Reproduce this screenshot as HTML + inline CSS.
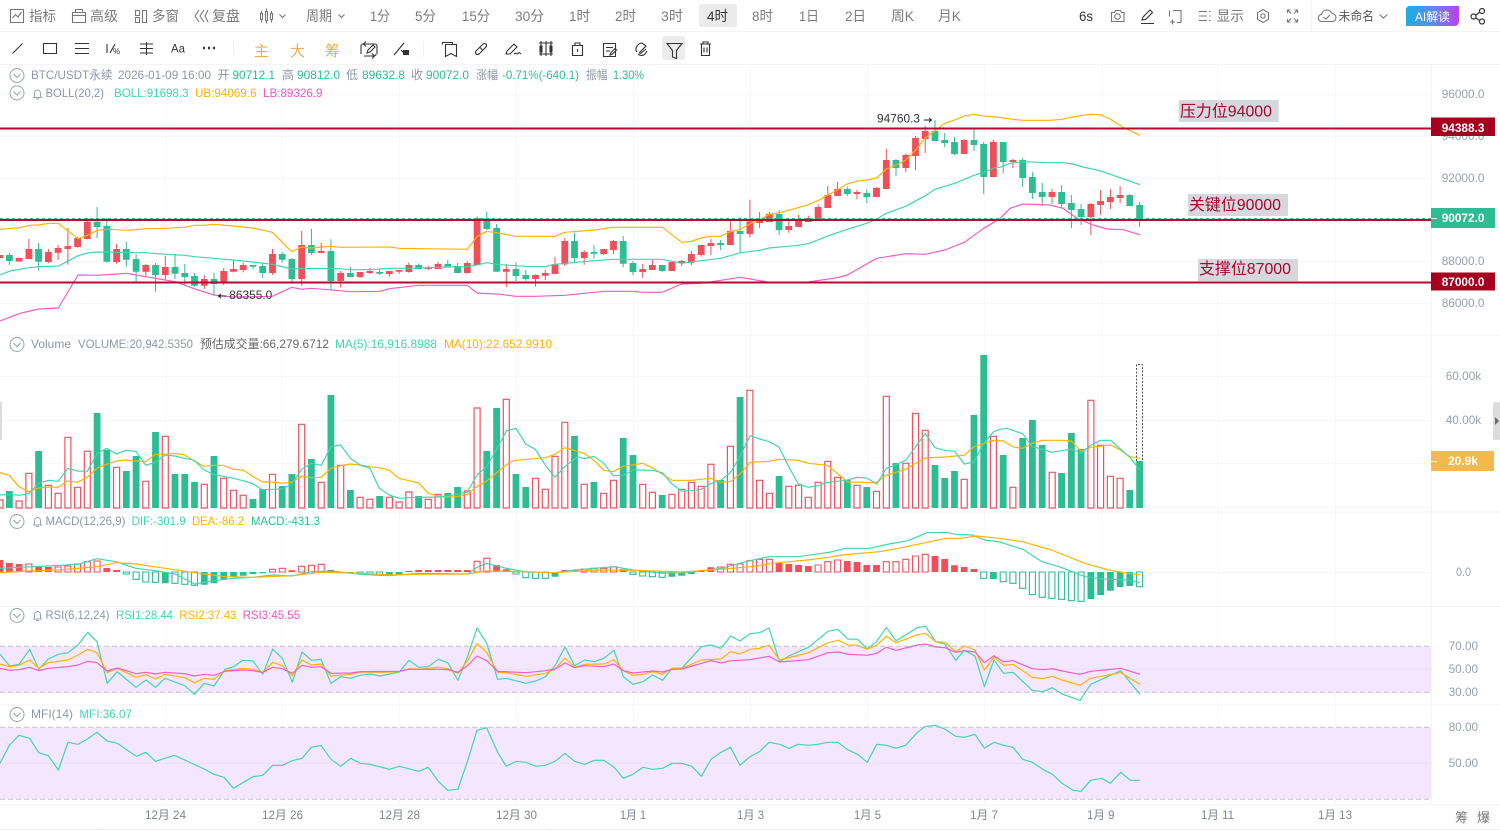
<!DOCTYPE html>
<html lang="zh">
<head>
<meta charset="utf-8">
<title>BTC/USDT K线</title>
<style>
html,body{margin:0;padding:0;background:#fff;width:1500px;height:831px;overflow:hidden}
svg{display:block}
text{font-family:"Liberation Sans","Noto Sans CJK SC",sans-serif;font-size:12px}
.tb{font-size:14px;fill:#7b7b7b}
.g{fill:#8f96a6}
.ax{fill:#98a0ae}
.tl{fill:#3ed6b0}
.gr{fill:#2ebd93}
.or{fill:#ffb300}
.pk{fill:#f552c5}
.dt{fill:#7f858f}
.lb{fill:#fff;font-weight:bold}
.an{font-size:16px;fill:#a8052c}
.line{fill:none;stroke-width:1.2;stroke-linejoin:round}
.ic{fill:none;stroke:#777;stroke-width:1.1}
.id{fill:none;stroke:#333;stroke-width:1.1}
.cc{fill:none;stroke:#9aa2b1;stroke-width:1}
</style>
</head>
<body>
<svg width="1500" height="831" viewBox="0 0 1500 831" xmlns="http://www.w3.org/2000/svg">
<rect width="1500" height="831" fill="#fff"/>

<!-- frame / grid -->
<path stroke="#f4f4f5" fill="none" d="M0 31.5H1500M0 64.5H1500M0 335H1500M0 512H1500M0 606.5H1500M0 705H1500M0 804.5H1500M1431.5 65V805M1311.5 0V31"/>
<path stroke="#f7f7f8" fill="none" d="M165.5 65V805M282.5 65V805M399.5 65V805M516.5 65V805M633.5 65V805M750.5 65V805M867.5 65V805M984.5 65V805M1101.5 65V805M1218.5 65V805M1335.5 65V805M0 94.5H1431M0 136.5H1431M0 178.5H1431M0 261.5H1431M0 303.5H1431M0 376.5H1431M0 420.5H1431M0 463.5H1431M0 507.8H1431M0 572.5H1431"/>
<path stroke="#efeff1" d="M0 829.5H1500M100.5 830V831M201.5 830V831M551.5 830V831" fill="none"/>

<!-- top toolbar -->
<rect x="699" y="4" width="38" height="23" rx="3" fill="#ebebeb"/>
<path class="ic" d="M10.5 9.5h13v13h-13zM12.5 18l3-3.5 2.5 2.5 3.5-5"/>
<text class="tb" x="29" y="21" textLength="27" lengthAdjust="spacingAndGlyphs">指标</text>
<path class="ic" d="M72.5 12.5h13v10h-13zM75.5 12.5v-3h7v3M72.5 15.5h13"/>
<text class="tb" x="90" y="21" textLength="28" lengthAdjust="spacingAndGlyphs">高级</text>
<path class="ic" d="M135.5 10.5h4v5h-4zM135.5 17.5h4v5h-4zM142.5 10.5h4v12h-4z"/>
<text class="tb" x="152" y="21" textLength="27" lengthAdjust="spacingAndGlyphs">多窗</text>
<path class="ic" d="M199 10l-4 6 4 6M204 10l-4 6 4 6M208 10l-3 6 3 6"/>
<text class="tb" x="212" y="21" textLength="28" lengthAdjust="spacingAndGlyphs">复盘</text>
<path class="ic" d="M260.5 13.5h2v6h-2zM261.5 11v2.5M261.5 19.5v3M265.5 11.5h2v9h-2zM266.5 8.5v3M266.5 20.5v3M270.5 13.5h2v6h-2zM271.5 11v2.5M271.5 19.5v3"/>
<path class="ic" d="M279.5 14.5l3 3 3-3"/>
<text class="tb" x="306" y="21" textLength="26" lengthAdjust="spacingAndGlyphs">周期</text>
<path class="ic" d="M338.5 14.5l3 3 3-3"/>
<text class="tb" x="370" y="21" textLength="20" lengthAdjust="spacingAndGlyphs">1分</text>
<text class="tb" x="415" y="21" textLength="21" lengthAdjust="spacingAndGlyphs">5分</text>
<text class="tb" x="462" y="21" textLength="28" lengthAdjust="spacingAndGlyphs">15分</text>
<text class="tb" x="515" y="21" textLength="29" lengthAdjust="spacingAndGlyphs">30分</text>
<text class="tb" x="569" y="21" textLength="21" lengthAdjust="spacingAndGlyphs">1时</text>
<text class="tb" x="615" y="21" textLength="21" lengthAdjust="spacingAndGlyphs">2时</text>
<text class="tb" x="661" y="21" textLength="22" lengthAdjust="spacingAndGlyphs">3时</text>
<text class="tb" x="707" y="21" textLength="21" lengthAdjust="spacingAndGlyphs" style="fill:#333">4时</text>
<text class="tb" x="752" y="21" textLength="21" lengthAdjust="spacingAndGlyphs">8时</text>
<text class="tb" x="799" y="21" textLength="20" lengthAdjust="spacingAndGlyphs">1日</text>
<text class="tb" x="845" y="21" textLength="21" lengthAdjust="spacingAndGlyphs">2日</text>
<text class="tb" x="891" y="21" textLength="23" lengthAdjust="spacingAndGlyphs">周K</text>
<text class="tb" x="938" y="21" textLength="23" lengthAdjust="spacingAndGlyphs">月K</text>
<text x="1079" y="21" textLength="14" lengthAdjust="spacingAndGlyphs" style="font-size:14px;fill:#333">6s</text>
<path class="ic" d="M1111.5 12.5h3l1-2h5l1 2h2.5v9h-12.5z"/><circle class="ic" cx="1117.5" cy="16.5" r="2.8"/>
<path class="id" d="M1142 20l1-3 7-7 2.5 2.5-7 7zM1141 23.5h13"/>
<path class="ic" d="M1173 10.5h8v12h-4M1169.5 10.5v6M1170 22h5M1172.5 19.5v5"/>
<path class="ic" d="M1199 11.5h8M1199 16h8M1199 20.5h8M1209 11.5h1.5M1209 16h1.5M1209 20.5h1.5"/>
<text class="tb" x="1216.5" y="21" textLength="27.5" lengthAdjust="spacingAndGlyphs">显示</text>
<path class="ic" d="M1263 9.5l5.5 3.2v6.6l-5.5 3.2-5.5-3.2v-6.6z"/><circle class="ic" cx="1263" cy="16" r="2.2"/>
<path class="ic" d="M1287.5 13v-3h3M1294.5 10h3v3M1287.5 19v3h3M1294.5 22h3v-3M1288 10.5l3 3M1297 10.5l-3 3M1288 21.5l3-3M1297 21.5l-3-3"/>
<path class="ic" d="M1322 21.5a3.5 3.5 0 0 1-.5-7 5.5 5.5 0 0 1 10.5-1 4 4 0 0 1 0 8zM1323.500 17l2.500 2 4-4"/>
<text x="1338.500" y="20.500" textLength="35.500" lengthAdjust="spacingAndGlyphs" style="font-size:12.500px;fill:#555">未命名</text>
<path class="ic" d="M1379.500 14.500l4 3.500 4-3.500"/>
<defs><linearGradient id="ai" x1="0" x2="1" y1="0" y2="0"><stop offset="0" stop-color="#1dade0"/><stop offset=".5" stop-color="#5d8cec"/><stop offset="1" stop-color="#c03df2"/></linearGradient></defs>
<path d="M1410 6H1459V21Q1459 26 1454 26H1406V10Q1406 6 1410 6Z" fill="url(#ai)"/>
<text x="1415" y="21" textLength="35" lengthAdjust="spacingAndGlyphs" fill="#fff">AI解读</text>
<g fill="none" stroke="#333" stroke-width="1.2"><circle cx="1473.500" cy="16.500" r="2.500"/><circle cx="1482" cy="11" r="2.500"/><circle cx="1482" cy="21.500" r="2.500"/><path d="M1475.700 15l4-2.700M1475.700 18l4 2.500"/></g>

<!-- second toolbar -->
<rect x="662" y="36" width="23" height="24" rx="3" fill="#ebebeb"/>
<path class="id" d="M12.500 53.500l10-10"/>
<path class="id" d="M43.500 43.500h13v10h-13z"/>
<path class="id" d="M75 43.500h14M75 48.500h14M75 53.500h14"/>
<path class="id" d="M107 44v9M110 53l5-9"/><text x="113" y="54" style="font-size:8px;fill:#333">%</text>
<path class="id" d="M140 44h13M140 48.500h13M140 53h13M146.500 42v13"/>
<text x="171" y="52.500" textLength="14" lengthAdjust="spacingAndGlyphs" fill="#333">Aa</text>
<path d="M203 48h2M208 48h2M213 48h2" stroke="#333" stroke-width="2.500" fill="none"/>
<path stroke="#f0f0f0" d="M233.500 41V57M423.500 41V57" fill="none"/>
<text x="254" y="56" style="font-size:15px;fill:#eab04e">主</text>
<text x="290" y="56" style="font-size:15px;fill:#eab04e">大</text>
<text x="325" y="56" style="font-size:15px;fill:#eab04e">筹</text>
<path class="id" d="M363 44h12a2 2 0 0 1 2 2v8M376 54a2 2 0 0 1-2 2H364M363 44a2 2 0 0 0-2 2v8M367 53l1-3 5-5 2 2-5 5zM366 41.500l-2.500 2.500 2.500 2.500M372 58.500l2.500-2.500-2.500-2.500"/>
<path class="id" d="M394 55l10-12M401 50l3 3"/><rect x="403" y="50" width="6" height="5" fill="#333"/>
<path class="id" d="M442.500 44.500v-2h10v2M445.500 44.500h11v12l-5.500-3-5.500 3z"/>
<path class="id" d="M476 51l7-7q1.500-1 3 0q1 1.500 0 3l-7 7q-1.500 1-3 0q-1-1.500 0-3zM480 47.500l3 3"/>
<path class="id" d="M506 54l1-3 7-7 3 3-7 7zM514 54c2-2 3 1 4-.5s2-.5 3 .5"/>
<path class="id" d="M539 43h14M539 54h14M541 41v15M546 41v15M551 41v15"/>
<path d="M539.500 45.500h3v7h-3zM549.500 45.500h3v7h-3z" fill="#333"/>
<path class="id" d="M572.500 45.500h10v10h-10zM575 45.500v-2.500h5v2.500M577.500 49v3"/>
<path class="id" d="M603.500 43.500h12v13h-12zM606 47.500h7M606 51h4M610 55l1-2.500 4-4 1.500 1.500-4 4z"/>
<path class="id" d="M637 52c-3-3 1-9 5-9l4 3-6 6c-1 1 0 2 1 1l5-4M638 54c2 2 5 2 7 0l2-3"/>
<path class="id" d="M667 43.500h15l-5.500 7v8l-4-1.500v-6.500z"/>
<path class="id" d="M700 44h11M703 44v-2h5v2M701.500 44v11.500h8V44M704 47.500v5M707 47.500v5"/>

<!-- chevrons / bells -->
<g class="cc">
<circle cx="17" cy="75.500" r="7"/><path d="M13.500 74l3.500 3.500 3.500-3.500"/>
<circle cx="17" cy="93" r="7"/><path d="M13.500 91.500l3.500 3.500 3.500-3.500"/>
<circle cx="17" cy="344.500" r="7"/><path d="M13.500 343l3.500 3.500 3.500-3.500"/>
<circle cx="17" cy="521.500" r="7"/><path d="M13.500 520l3.500 3.500 3.500-3.500"/>
<circle cx="17" cy="615.500" r="7"/><path d="M13.500 614l3.500 3.500 3.500-3.500"/>
<circle cx="17" cy="714.500" r="7"/><path d="M13.500 713l3.500 3.500 3.500-3.500"/>
<path d="M33 97.500h9M34.500 97.500v-4.500a3 3 0 0 1 6 0v4.500M36 99h3"/>
<path d="M33 525h9M34.500 525v-4.500a3 3 0 0 1 6 0v4.500M36 526.500h3"/>
<path d="M33 619h9M34.500 619v-4.500a3 3 0 0 1 6 0v4.500M36 620.500h3"/>
</g>

<!-- legends -->
<text class="g" x="31" y="79" textLength="81.500" lengthAdjust="spacingAndGlyphs">BTC/USDT永续</text>
<text class="g" x="118" y="79" textLength="93" lengthAdjust="spacingAndGlyphs">2026-01-09 16:00</text>
<text class="g" x="217.500" y="79">开</text><text class="gr" x="232.500" y="79" textLength="42.500" lengthAdjust="spacingAndGlyphs">90712.1</text>
<text class="g" x="282" y="79">高</text><text class="gr" x="297" y="79" textLength="43" lengthAdjust="spacingAndGlyphs">90812.0</text>
<text class="g" x="346" y="79">低</text><text class="gr" x="362" y="79" textLength="43" lengthAdjust="spacingAndGlyphs">89632.8</text>
<text class="g" x="411" y="79">收</text><text class="gr" x="426" y="79" textLength="43" lengthAdjust="spacingAndGlyphs">90072.0</text>
<text class="g" x="476" y="79" textLength="22" lengthAdjust="spacingAndGlyphs">涨幅</text><text class="gr" x="502" y="79" textLength="77" lengthAdjust="spacingAndGlyphs">-0.71%(-640.1)</text>
<text class="g" x="586" y="79" textLength="21.500" lengthAdjust="spacingAndGlyphs">振幅</text><text class="gr" x="613" y="79" textLength="31" lengthAdjust="spacingAndGlyphs">1.30%</text>

<text class="g" x="45.500" y="97" textLength="58.500" lengthAdjust="spacingAndGlyphs">BOLL(20,2)</text>
<text class="tl" x="114" y="97" textLength="74.500" lengthAdjust="spacingAndGlyphs">BOLL:91698.3</text>
<text class="or" x="195" y="97" textLength="61.500" lengthAdjust="spacingAndGlyphs">UB:94069.6</text>
<text class="pk" x="263" y="97" textLength="59.500" lengthAdjust="spacingAndGlyphs">LB:89326.9</text>

<text class="g" x="31" y="348" textLength="40" lengthAdjust="spacingAndGlyphs">Volume</text>
<text class="g" x="78" y="348" textLength="115" lengthAdjust="spacingAndGlyphs">VOLUME:20,942.5350</text>
<text x="200" y="348" textLength="129" lengthAdjust="spacingAndGlyphs" fill="#666">预估成交量:66,279.6712</text>
<text class="tl" x="335" y="348" textLength="102" lengthAdjust="spacingAndGlyphs">MA(5):16,916.8988</text>
<text class="or" x="444" y="348" textLength="108" lengthAdjust="spacingAndGlyphs">MA(10):22,652.9910</text>

<text class="g" x="45.500" y="525" textLength="80" lengthAdjust="spacingAndGlyphs">MACD(12,26,9)</text>
<text class="tl" x="131.600" y="525" textLength="54" lengthAdjust="spacingAndGlyphs">DIF:-301.9</text>
<text class="or" x="192" y="525" textLength="52" lengthAdjust="spacingAndGlyphs">DEA:-86.2</text>
<text class="gr" x="251" y="525" textLength="69" lengthAdjust="spacingAndGlyphs">MACD:-431.3</text>

<text class="g" x="45.500" y="619" textLength="64" lengthAdjust="spacingAndGlyphs">RSI(6,12,24)</text>
<text class="tl" x="116" y="619" textLength="57" lengthAdjust="spacingAndGlyphs">RSI1:28.44</text>
<text class="or" x="179.400" y="619" textLength="57" lengthAdjust="spacingAndGlyphs">RSI2:37.43</text>
<text class="pk" x="242.600" y="619" textLength="57.500" lengthAdjust="spacingAndGlyphs">RSI3:45.55</text>

<text class="g" x="31" y="718" textLength="42" lengthAdjust="spacingAndGlyphs">MFI(14)</text>
<text class="tl" x="79.400" y="718" textLength="52.600" lengthAdjust="spacingAndGlyphs">MFI:36.07</text>

<!-- candles: wicks -->
<path fill="none" stroke="#2ebd93" stroke-width="1" d="M9.400 253V265M38.600 243V270.700M97.100 207V238M106.800 217.700V262.700M126.300 242V266.700M136.100 254V281.700M155.500 263V291.700M175 254V279M184.800 264V285M194.500 273V286.700M214 272.700V295M253 265V269M262.700 263V277.700M282.200 252V262.400M291.900 258V283.700M311.400 228.700V255M330.900 239.400V290M350.400 266.700V277M379.600 269V275M418.600 263.400V269M447.800 259.700V266.400M457.600 263V273M486.800 211.400V230M496.600 224V271.700M516 262.400V281M525.800 270V280.700M574.500 232.700V263.400M594 245V258.700M623.200 236V267M633 261V275M662.200 265V272M720.600 240V250M740.100 217V253.400M779.100 210V235M847.300 186.700V196M866.800 189.400V203M896 159V175.700M935 120V141M944.700 133V147M954.500 137V155M974 128V151M983.700 142V194M1003.200 142V173.400M1022.700 158V187M1032.400 172V199M1042.200 183V206M1061.600 185V208M1071.400 195V228M1081.100 204V225M1129.800 194V206M1139.600 202V227"/>
<path fill="none" stroke="#ef4f59" stroke-width="1" d="M19.100 257.300V261.700M28.900 239V259M48.400 249V263M58.100 245V260M67.900 228V264.700M77.600 236.700V247.700M87.300 217.700V239.300M116.600 244V263.700M145.800 264V276.700M165.300 256V280M204.300 275V289M223.700 268V285M233.500 260V272.400M243.200 262.700V272.400M272.500 249V274.700M301.700 231V285.700M321.200 243V253M340.700 271V287.400M360.100 272V278M369.900 268V274M389.400 271V276.700M399.100 270V273.700M408.900 262.400V272.700M428.300 265.700V270M438.100 262V269M467.300 261.400V273.700M477.100 216.400V265M506.300 263.700V287M535.500 274.400V286.400M545.300 270V280M555 257V274M564.800 238V266M584.200 250V264.700M603.700 249V255M613.500 240V254M642.700 264V278M652.400 260V270M681.700 259.700V266M691.400 251V265M701.200 245V256.700M710.900 239V255M730.400 221.400V245M749.900 199.700V237.400M759.600 212V228M769.400 212V222M788.800 220V232.700M798.600 215V227M808.300 215.700V222M818.100 204.400V219M827.800 186V208M837.600 182V196M857 190V199.400M876.500 187V197M886.300 149V189M905.800 154V172M915.500 136V170M925.200 126V153M964.200 139V154M993.400 140V177M1012.900 159V168M1052 189V204M1090.900 203V235M1100.600 190V215M1110.400 189V209M1120.100 186V203"/>
<!-- candles: bodies -->
<path fill="none" stroke="#2ebd93" stroke-width="6.800" d="M9.400 255V261M38.600 249V261.700M97.100 221.700V227M106.800 226V261.700M126.300 249V259.700M136.100 259V271.700M155.500 265V275M175 267V273.700M184.800 273V277M194.500 276V285.700M214 279V284M253 265V266.700M262.700 266V273M282.200 254V259.700M291.900 259V279M311.400 245V253M330.900 251V281M350.400 273V277M379.600 272V273.700M418.600 265V269M447.800 264V266.400M457.600 266V273M486.800 218.300V229M496.600 228V271.700M516 269V276M525.800 275V279M574.500 241V258M594 252V253.700M623.200 241V263.700M633 263V272M662.200 265V271M720.600 243V245M740.100 231V234M779.100 214V230M847.300 189V194M866.800 193V197M896 160V168M935 131V141M944.700 140V143M954.500 142V154M974 140V145M983.700 144V177M1003.200 142V162M1022.700 160V178M1032.400 177V193M1042.200 192V197M1061.600 192V204M1071.400 203V210M1081.100 209V217M1129.800 195V206M1139.600 205V219"/>
<path fill="none" stroke="#ef4f59" stroke-width="6.800" d="M0 255V258M19.100 258V261.500M28.900 249V259M48.400 252V262M58.100 248V252.700M67.900 246V249M77.600 238V247M87.300 221.700V239M116.600 249V262M145.800 265V271.700M165.300 267V275M204.300 279V285.700M223.700 271V282.700M233.500 269V271.700M243.200 265V270M272.500 254V273M301.700 245V279M321.200 251V253M340.700 273V281M360.100 272V277M369.900 271V273M389.400 271V274M399.100 270V271.700M408.900 265V272M428.300 267.700V269M438.100 264V269M467.300 263V273M477.100 218.300V265M506.300 269V271.700M535.500 275V279M545.300 273V275.700M555 264V274M564.800 241V264.400M584.200 252V258M603.700 249V254M613.500 241V250M642.700 269V272M652.400 265V270M671.900 262V271M681.700 261V262.700M691.400 254V262.700M701.200 245V255M710.900 243V246M730.400 231V245M749.900 221.400V234M759.600 220V223M769.400 214V222M788.800 226V230M798.600 220V227M808.300 218V222M818.100 207V219M827.800 195V208M837.600 189V196M857 192V194M876.500 188V197M886.300 160V189M905.800 155V168M915.500 138V156M925.200 131V139M964.200 140V154M993.400 142V177M1012.900 160V162M1052 192V197M1090.900 204V217M1100.600 201V205M1110.400 197V202M1120.100 195V198"/>

<!-- BOLL -->
<polyline class="line" stroke="#ffb300" points="0,229.300 20,227.700 29.300,225.300 38.700,225 48.700,223.300 58.300,223.300 78,238.700 87.300,235.300 97.300,230.300 106.700,229.300 116.700,229.700 126.300,230.300 136,229.700 145.700,228.700 165.300,228.300 184.700,227.300 194.300,225.300 204,225.300 213.700,224.300 233.300,226 252.700,228 272.300,232.300 291.700,251.700 301.700,247 311.300,248 331,246.300 340.700,247.300 389.300,247 399,248.300 467.300,249.300 477,236.700 486.700,231.300 500,233.300 516,236.300 555,236.300 564.700,232.300 594,230 613.300,227.300 662.300,227.300 681.700,242.300 691.300,241.300 701,238 710.700,236.300 720.700,236.300 730.300,231.700 740.300,229.300 749.700,224 759.700,220 769.300,214.300 779,212.700 788.700,210.300 808.300,204.700 818,200.700 827.700,195 837.300,190 847.300,184 857,181 866.700,180 876.700,178 886.300,169 896,165 905.700,160 915.700,150 925.300,137.700 935,131 944.700,123.300 954.700,120 964.300,116 974,114.300 983.700,116 1000,117.500 1013,119.300 1023,120.300 1050,120.300 1062,119.300 1072,117 1090,114.300 1100,114.700 1110,119 1123,127.300 1140,135.300"/>
<polyline class="line" stroke="#3ed6b0" points="0,275 10,271 29,267.700 38.700,266.700 58.300,266 67.700,261.300 78,255.700 87.300,253 97.300,252 116.700,252.300 136,252.700 145.700,252.700 165.300,254.300 184.700,255.300 194.300,256.700 213.700,258.300 233.300,260 252.700,262 272.300,264.300 291.700,269 311.300,268.300 340.700,268.700 350.300,269.700 370,269.700 389.300,268.300 409,268.300 428.300,267.700 447.700,267 467.300,266.700 477,265 486.700,262.700 500,264.700 526,266.300 545.300,266.700 555,264.300 594,260.700 613.300,259.300 662.300,259.300 681.700,263.300 701,260.700 720.700,258.300 740.300,252.700 759.700,250.300 769.300,248 798.300,245.300 808.300,243.700 827.700,236 847.300,229.300 866.700,223.300 876.700,219.300 886.300,213.300 905.700,206.300 925.300,195.700 935,189.300 954.700,183.300 974,175.300 983.700,172.300 993.700,168 1000,167.300 1010,163.300 1023,161.700 1050,162.700 1063,162.700 1073,164 1083,167 1100,170.700 1113,175.300 1140,184.700"/>
<polyline class="line" stroke="#f25cc8" points="0,321 20,313.300 38.700,309 58.300,308 78,275 97.300,275.300 116.700,274 126.300,273.300 145.700,276.700 175,281.700 194.300,288.700 213.700,295 233.300,297 252.700,296.700 272.300,296.300 291.700,287.300 301.700,289.300 311.300,288.300 340.700,290.700 350.300,291.700 380,291.300 389.300,288.700 418.700,285.300 467.300,285.300 477,293 500,294.300 516,296.300 535.300,296.300 564.700,295.300 603.700,291.300 633,291.300 642.700,292.300 662.300,292.300 681.700,284 701,283.300 740.300,277.300 769.300,282.300 808.300,282 837.300,277.700 847.300,275 876.700,258.300 905.700,253.700 925.300,254.300 945,250 964.300,242.300 983.700,228.300 1000,218.700 1010,208.300 1023,204 1050,205 1063,208.300 1077,218.300 1093,225 1107,229 1123,229.700 1140,234.700"/>

<!-- price lines -->
<path stroke="#2ebd93" stroke-width="1" stroke-dasharray="3 3" d="M0 218.500H1431" fill="none"/>
<path stroke="#b30a30" stroke-width="2" d="M0 128.500H1431M0 220H1431M0 282.500H1431" fill="none"/>

<!-- annotations -->
<text x="877" y="122.500" textLength="43" lengthAdjust="spacingAndGlyphs" fill="#333">94760.3</text>
<path stroke="#222" fill="none" d="M924 120h7M929 118l2.500 2-2.500 2"/>
<text x="229.300" y="299" textLength="43" lengthAdjust="spacingAndGlyphs" fill="#333">86355.0</text>
<path stroke="#222" fill="none" d="M226 296h-7M221 294l-2.500 2 2.500 2"/>

<rect x="1178.700" y="100" width="100" height="22" fill="#d6d8de"/>
<text class="an" x="1180" y="116.500" textLength="92" lengthAdjust="spacingAndGlyphs">压力位94000</text>
<rect x="1188" y="194" width="100" height="22" fill="#d6d8de"/>
<text class="an" x="1189" y="210" textLength="92" lengthAdjust="spacingAndGlyphs">关键位90000</text>
<rect x="1198" y="259" width="100" height="22" fill="#d6d8de"/>
<text class="an" x="1199" y="274" textLength="92" lengthAdjust="spacingAndGlyphs">支撑位87000</text>

<!-- axis labels -->
<text class="ax" x="1441.700" y="98" textLength="42.800" lengthAdjust="spacingAndGlyphs">96000.0</text>
<text class="ax" x="1441.700" y="140" textLength="42.800" lengthAdjust="spacingAndGlyphs">94000.0</text>
<text class="ax" x="1441.700" y="182" textLength="42.800" lengthAdjust="spacingAndGlyphs">92000.0</text>
<text class="ax" x="1441.700" y="265" textLength="42.800" lengthAdjust="spacingAndGlyphs">88000.0</text>
<text class="ax" x="1441.700" y="307" textLength="42.800" lengthAdjust="spacingAndGlyphs">86000.0</text>
<text class="ax" x="1445.700" y="380" textLength="35.500" lengthAdjust="spacingAndGlyphs">60.00k</text>
<text class="ax" x="1445.700" y="424" textLength="35.500" lengthAdjust="spacingAndGlyphs">40.00k</text>
<text class="ax" x="1456" y="576" textLength="15" lengthAdjust="spacingAndGlyphs">0.0</text>
<text class="ax" x="1448.600" y="650" textLength="29.500" lengthAdjust="spacingAndGlyphs">70.00</text>
<text class="ax" x="1448.600" y="673" textLength="29.500" lengthAdjust="spacingAndGlyphs">50.00</text>
<text class="ax" x="1448.600" y="696" textLength="29.500" lengthAdjust="spacingAndGlyphs">30.00</text>
<text class="ax" x="1448.600" y="731" textLength="29.500" lengthAdjust="spacingAndGlyphs">80.00</text>
<text class="ax" x="1448.600" y="767" textLength="29.500" lengthAdjust="spacingAndGlyphs">50.00</text>

<rect x="1431" y="117.500" width="64" height="18.500" fill="#a5001f"/>
<text class="lb" x="1441.700" y="132" textLength="42.800" lengthAdjust="spacingAndGlyphs">94388.3</text>
<rect x="1431" y="208" width="64" height="20" fill="#2ebd93"/>
<path stroke="#fff" d="M1431 218.500h6" fill="none"/>
<text class="lb" x="1441.700" y="222" textLength="42.800" lengthAdjust="spacingAndGlyphs">90072.0</text>
<rect x="1431" y="272.500" width="64" height="18" fill="#a5001f"/>
<text class="lb" x="1441.700" y="286" textLength="42.800" lengthAdjust="spacingAndGlyphs">87000.0</text>

<!-- volume -->
<path fill="none" stroke="#2ebd93" stroke-width="6.800" d="M9.400 491V508M38.600 451V508M97.100 413V508M106.800 450V508M126.300 471V508M136.100 456V508M155.500 432V508M175 474V508M184.800 474V508M194.500 482V508M214 456V508M253 499V508M262.700 489V508M282.200 486V508M291.900 474V508M311.400 459V508M330.900 395V508M350.400 490V508M379.600 496V508M418.600 496V508M447.800 493V508M457.600 487V508M486.800 451V508M496.600 408V508M516 474V508M525.800 487V508M574.500 436V508M594 482V508M623.200 438V508M633 455V508M662.200 495V508M720.600 480V508M740.100 397V508M779.100 476V508M847.300 480V508M866.800 487V508M896 463V508M935 465V508M944.700 478V508M954.500 471V508M974 415V508M983.700 355V508M1003.200 455V508M1022.700 438V508M1032.400 420V508M1042.200 445V508M1061.600 473V508M1071.400 433V508M1081.100 449V508M1129.800 490V508M1139.600 461V508"/>
<path fill="#fff" stroke="#f0505f" stroke-width="1.200" d="M-3 500h6V508h-6zM16.100 501h6V508h-6zM25.900 473.300h6V508h-6zM45.400 485.300h6V508h-6zM55.100 493.300h6V508h-6zM64.900 437.300h6V508h-6zM74.600 487.300h6V508h-6zM84.300 451.300h6V508h-6zM113.600 467.300h6V508h-6zM142.800 481.300h6V508h-6zM162.300 436.300h6V508h-6zM201.300 484.300h6V508h-6zM220.700 478.300h6V508h-6zM230.500 490.300h6V508h-6zM240.200 495.300h6V508h-6zM269.500 474.300h6V508h-6zM298.700 424.300h6V508h-6zM318.200 482.300h6V508h-6zM337.700 465.300h6V508h-6zM357.100 497.300h6V508h-6zM366.900 499.300h6V508h-6zM386.400 497.300h6V508h-6zM396.100 502h6V508h-6zM405.900 492h6V508h-6zM425.300 499.300h6V508h-6zM435.100 494.300h6V508h-6zM464.300 491h6V508h-6zM474.100 408h6V508h-6zM503.300 399.300h6V508h-6zM532.500 478.300h6V508h-6zM542.300 489.300h6V508h-6zM552 456.300h6V508h-6zM561.800 422.300h6V508h-6zM581.200 484.300h6V508h-6zM600.700 493.300h6V508h-6zM610.500 480.300h6V508h-6zM639.700 484.300h6V508h-6zM649.400 492.300h6V508h-6zM668.900 494.300h6V508h-6zM678.700 489.300h6V508h-6zM688.400 482.300h6V508h-6zM698.200 486.300h6V508h-6zM707.900 464.300h6V508h-6zM727.400 446.300h6V508h-6zM746.900 390.300h6V508h-6zM756.600 480.300h6V508h-6zM766.400 493.300h6V508h-6zM785.800 486.300h6V508h-6zM795.600 485.300h6V508h-6zM805.300 497.300h6V508h-6zM815.100 482.300h6V508h-6zM824.800 461.300h6V508h-6zM834.600 477.300h6V508h-6zM854 485.300h6V508h-6zM873.500 491.300h6V508h-6zM883.300 396.300h6V508h-6zM902.800 463.300h6V508h-6zM912.500 413.300h6V508h-6zM922.200 430.300h6V508h-6zM961.200 479.300h6V508h-6zM990.400 436.300h6V508h-6zM1009.900 487.300h6V508h-6zM1049.200 472.300h6V508h-6zM1087.900 400.300h6V508h-6zM1097.600 445.300h6V508h-6zM1107.400 476.300h6V508h-6zM1117.100 478.300h6V508h-6z"/>
<path fill="none" stroke="#555" stroke-width="1" stroke-dasharray="2 1.500" d="M1136.500 461V364.500H1142.500V461"/>
<polyline class="line" stroke="#ffb300" points="0,472.700 9.300,475.300 19,486.700 28.700,491.700 38.700,488 48.300,487 58.300,487.300 67.700,481 77.300,482.300 87.300,477.300 97,468.300 106.700,464.300 116.300,461 126.300,460 136,461 145.700,461.700 155.300,454.300 165.300,454.300 175,453.300 184.700,455 194.300,461 204,466.300 213.700,465.300 223.300,465.300 233.300,469.300 243,470 252.700,476.300 262.700,482 272.300,482 282,483.300 291.700,482.300 301.700,476.300 311.300,477.700 321.300,477.300 331,468.300 340.700,465.700 350.300,464 360,465 370,466.700 379.300,467.700 389.300,470.300 399,478.300 409,480.700 418.700,483 428.300,493.300 438,496 447.700,497 457.300,496.700 467.300,494.300 477,486.300 486.700,481 500,470 509.700,462.300 516,460.300 545.300,457.700 555,454.300 564.700,447.700 584,453.300 594,460.300 603.700,470.300 613.300,471.700 623.300,466.300 642.700,463.300 652.300,467.700 672,480.300 691.300,480.300 710.700,478.300 720.700,482.300 730.300,481.700 740.300,473.700 750,462.300 769.300,461.300 779,459.300 798.300,460.300 808.300,463.300 827.700,465.300 837.300,473.300 847.300,482 876.700,482.700 886.300,475 896,472.300 905.700,469 925.300,458 944.700,457 964.300,455.300 974,446.700 993.700,440.300 1003.300,441 1013.300,447 1022.700,448.300 1032.300,443.300 1042,440.300 1061.700,440.300 1071.300,441 1081.300,451.300 1091,447.300 1110.700,445 1120.300,450 1130,456.700 1139.700,458.300"/>
<polyline class="line" stroke="#3ed6b0" points="0,495 10,494.300 19,495.300 28.700,493.700 38.700,483.300 48.300,480.300 58.300,481.300 67.700,468.300 77.300,471 87.300,471.300 97.300,453.300 106.700,448.300 116.300,454 126.300,450.300 136,451.300 145.700,465.300 155.300,462.300 165.300,455 175,456 184.700,458.300 194.300,460.300 204,470 213.700,474.300 223.300,476.300 233.300,478.300 243,480.700 252.700,483.700 262.700,490 272.300,489.300 282,489 291.700,484 301.700,469.300 311.300,463.300 321.300,465.300 331,446.700 340.700,445 350.300,458.300 360,465 370,468.300 379.300,488.300 389.300,495 399,498.300 409,497.700 418.700,497.300 438,497 447.700,496 457.300,494.300 467.300,492 477,475 486.700,466.700 500,443.300 506.300,431 516,428.300 525.700,444 535.300,449.300 545.300,465 555,477.300 564.700,466.700 577.700,456.700 584.300,458.700 594,456.300 603.700,463.300 613.300,475.700 623.300,475.300 633,470 652.300,470.300 662.300,472.700 672,484 681.700,491 691.300,490.700 701,489.300 710.700,483.700 720.700,480.300 730.300,472.700 740.300,456 750,435.700 759.700,439 769.300,441.700 779,447 788.700,466.700 798.300,484 808.300,487.300 818,485.700 827.700,482.300 837.300,481.300 847.300,480 857,477.300 866.700,478 876.700,484 886.300,468.300 896,464.700 905.700,460.300 915.700,446.700 925.300,433.700 935,447.700 944.700,450.300 954.700,451.300 964.300,464 974,462 983.700,443.300 993.700,431.700 1000,429.300 1006.700,428.300 1022.700,433.700 1032.300,446.700 1042,449 1052,452.300 1061.700,450.700 1071.300,449 1081.300,453 1091,445 1100.700,440.300 1110.700,440.300 1120.300,449 1130,457.300 1139.700,470"/>

<rect x="1431" y="451" width="63" height="20" fill="#f7b84b"/>
<path stroke="#fff" d="M1431 461.500h6" fill="none"/>
<text class="lb" x="1448" y="465" textLength="30" lengthAdjust="spacingAndGlyphs">20.9k</text>
<rect x="1493" y="402" width="7" height="38" rx="2" fill="#dcdcdc"/>
<path d="M1495 417v8l4-4z" fill="#666"/>
<rect x="0" y="402" width="2" height="38" fill="#dcdcdc"/>

<!-- MACD -->
<path fill="none" stroke="#ef4f59" stroke-width="6.800" d="M0 560V572M9.400 563V572M19.100 564V572M38.600 567V572M48.400 567V572M106.800 568V572M116.600 570V572M291.900 570.300V572M330.900 570V572M408.900 571V572M418.600 570V572M428.300 570V572M438.100 570V572M447.800 570V572M457.600 570V572M467.300 570V572M496.600 565V572M506.300 569.300V572M564.800 570V572M574.500 570V572M623.200 569.300V572M701.200 571V572M710.900 567.300V572M779.100 562.700V572M788.800 564V572M798.600 565V572M808.300 566V572M847.300 561V572M857 562V572M866.800 565V572M876.500 565V572M935 556V572M944.700 559V572M954.500 565.300V572M964.200 567V572M974 569V572"/>
<path fill="none" stroke="#2ebd93" stroke-width="6.800" d="M165.300 572V583.300M204.300 572V584.700M214 572V583.300M223.700 572V579.300M233.500 572V576.700M243.200 572V575.700M253 572V574M262.700 572V573.300M340.700 572V573.300M350.400 572V573.300M389.400 572V575M399.100 572V575M555 572V576.700M671.900 572V576.700M681.700 572V575.700M691.400 572V574M993.400 572V579M1090.900 572V599M1100.600 572V595M1110.400 572V590.700M1120.100 572V587M1129.800 572V586"/>
<path fill="#fff" stroke="#f0505f" stroke-width="1.100" d="M25.900 564h6V572h-6zM55.100 567h6V572h-6zM64.900 566h6V572h-6zM74.600 564h6V572h-6zM84.300 561.700h6V572h-6zM94.100 561h6V572h-6zM269.500 569.300h6V572h-6zM279.200 568.300h6V572h-6zM298.700 566.300h6V572h-6zM308.400 565.300h6V572h-6zM318.200 564.300h6V572h-6zM474.100 561.300h6V572h-6zM483.800 558.300h6V572h-6zM581.200 569h6V572h-6zM591 568.300h6V572h-6zM600.700 568.300h6V572h-6zM610.500 566.700h6V572h-6zM717.600 567h6V572h-6zM727.400 564.300h6V572h-6zM737.100 564h6V572h-6zM746.900 560.700h6V572h-6zM756.600 559.300h6V572h-6zM766.400 559.300h6V572h-6zM815.100 565h6V572h-6zM824.800 561.700h6V572h-6zM834.600 560h6V572h-6zM883.300 561.700h6V572h-6zM893 561.700h6V572h-6zM902.800 559.300h6V572h-6zM912.500 556h6V572h-6zM922.200 554.300h6V572h-6z"/>
<path fill="#fff" stroke="#2ebd93" stroke-width="1.100" d="M123.300 572h6V574h-6zM133.100 572h6V579.300h-6zM142.800 572h6V582h-6zM152.500 572h6V582.300h-6zM172 572h6V583.300h-6zM181.800 572h6V584.300h-6zM191.500 572h6V585.300h-6zM357.100 572h6V574h-6zM366.900 572h6V574.300h-6zM376.600 572h6V574.300h-6zM513 572h6V574h-6zM522.800 572h6V577.700h-6zM532.500 572h6V578.300h-6zM542.300 572h6V578.300h-6zM630 572h6V574.300h-6zM639.700 572h6V576h-6zM649.400 572h6V576.700h-6zM659.200 572h6V577.300h-6zM980.700 572h6V578.300h-6zM1000.200 572h6V581.700h-6zM1009.900 572h6V583.300h-6zM1019.700 572h6V588.300h-6zM1029.400 572h6V594.700h-6zM1039.200 572h6V597.300h-6zM1048.900 572h6V598.300h-6zM1058.600 572h6V599.300h-6zM1068.400 572h6V600.700h-6zM1078.100 572h6V601.300h-6zM1136.600 572h6V586.700h-6z"/>
<polyline class="line" stroke="#3ed6b0" points="0,568.300 19,567.300 48,566 78,564.300 97,558.700 116,561.700 136,568.300 155.500,570.700 175,574 194.300,584 214,580.700 233.500,578.300 253.600,577.300 272.700,575 292,576 311,571.700 331,571 360,574.300 389.500,575.700 418.700,573.300 467.500,574 477,567.300 486.700,563.300 506.300,568.300 526,572 555,572.700 574.700,570 614,566.700 633,570 662.700,573.300 692,572 721,568.300 750,560.700 769,556.700 798,556.700 829,552.300 845.700,548.300 869.600,548.300 888.800,544 908,540.700 927,532.700 946,532.300 955.700,534.300 972.500,535 984.400,540 998.800,541.700 1022.700,549.300 1042,561.700 1061,567.300 1085,576.700 1104,579 1128,580 1140,582.700"/>
<polyline class="line" stroke="#ffb300" points="0,572.700 28.700,571 58.400,570 97,566.700 116.300,562.700 136,564 165,568.300 194.300,572.700 225,576.700 253.600,577.300 292,575.700 321,572.300 359,573.300 389.500,575 418.700,574.300 467.500,574 486.700,571 526,571.700 555,572.700 594.700,570 633,570.300 682,572 711,570 750,566.700 778.700,562.700 807.400,560 829,557.300 841,555 879,551.700 893.500,549.300 917.500,544.300 946,538.300 960.500,538.300 977.300,536 998.800,538.300 1022.700,541.700 1051.400,550 1085,563.300 1108.800,570 1128,573.300 1140,575"/>

<!-- RSI -->
<rect x="0" y="646.300" width="1431" height="46" fill="#f4e6fd"/>
<path stroke="#c6c2ca" stroke-width="1" stroke-dasharray="5 3" fill="none" d="M0 646.300H1431M0 692.300H1431"/>
<path stroke="#ece0f5" fill="none" d="M0 669.300H1431"/>
<polyline class="line" stroke="#3ed6b0" points="0,654 9.600,666 19,664.300 29.700,649.300 38.800,669.300 48.300,659 58.400,654.300 68,652.700 78,645 87.600,632.300 97,641.700 107.200,683.300 117.200,671.700 136,687.300 146,680 155.500,687.300 165,678.300 184.700,685.700 194.300,694.300 204.300,683.300 214,686 225,669.300 233.500,666.700 243,660.300 253,661 262.700,674.300 272.700,649 282.300,658.300 292.300,682.300 302,652 311.500,660.300 321,659.300 331,683.300 340.700,676.700 350.700,678.300 360.300,675.300 370,674 380,676 399.500,672 409,660.300 418.700,667.300 428.300,666.700 438.300,659.300 447.800,662.700 457.900,680.300 467.500,656.700 477,628 486.700,643.300 497.600,679.300 506.300,678.300 526,683.300 535.900,681 545.500,676.700 555,665.700 565,647 574.600,665.700 584.700,660 594.300,661.700 603.800,658.300 613.900,650.300 623.400,676.700 633,684.300 643,681.700 652.600,675 662.700,680.300 672,668.300 681.800,668.300 701.400,646.700 711,645 721,648.300 730.600,636 740,641 750,633.700 759.600,632.700 769,628 779.700,662 788.800,656 808.400,647.300 828,631.300 838,629.300 847.600,639 857.700,639.300 867.200,649 876.800,641.300 886.400,627.300 896,640.700 917.500,627.700 925.600,626.300 935.600,641.700 945.200,644.300 955.700,660.300 964.400,650.300 975,656 984.400,686.700 994,660 1003.600,673.300 1013,672.300 1032.300,690.300 1042.800,691.700 1052.400,687.700 1062,694 1080,700.300 1090.700,684.300 1120.800,670.700 1140,694.300"/>
<polyline class="line" stroke="#ffb300" points="0,664 9.600,666.700 19,665.300 29.700,660 38.800,668.300 48.300,662.700 68,660 78,655 87.600,649.300 97,652.700 107.200,672.700 117.200,668.300 136,677.300 146,674.700 155.500,679 165,674.300 184.700,677.700 194.300,682.700 204.300,678.300 214,679.300 225,670.700 243,668.300 253,669.300 262.700,672.700 272.700,662.300 282.300,665.700 292.300,675.700 302,660 311.500,665 321,664 331,676 350.700,674.300 360.300,672 380,672.300 399.500,671.700 409,668.700 418.700,669.300 438.300,667.300 447.800,668.700 457.900,673.300 467.500,660.700 477,643.700 486.700,652.300 497.600,672.300 506.300,672.700 526,676.300 545.500,673.300 555,669 565,658 574.600,667.300 584.700,664.300 603.800,664 613.900,659.700 623.400,670.700 633,675.300 643,674.300 652.600,671.700 662.700,674.300 672,668.300 681.800,668.300 701.400,660 721,659 730.600,651.700 740,654 750,649.300 759.600,648.300 769,645.300 779.700,660 808.400,652.700 828,642.700 838.500,640.300 848,645 857.700,645.300 867.200,649.300 876.800,645 886.400,636.300 896,642.700 917.500,634.700 925.600,633.300 935.600,641.700 945.200,642.300 955.700,651.700 964.400,646 975,650 984.400,670 994,657 1003.600,665.300 1013,664.300 1032.300,677.300 1042.800,678.700 1052.400,676.300 1062,680 1080,685.300 1090.700,678.300 1120.800,672.700 1140,684.300"/>
<polyline class="line" stroke="#f25cc8" points="0,668.300 9.600,670.300 19,669.700 29.700,667.300 38.800,670.700 48.300,668.300 68,666.700 78,665 87.600,661.300 97,662.700 107.200,671 117.200,668 136,673.700 146,672.300 155.500,674 165,672.300 184.700,673.700 194.300,676 204.300,674.300 214,675.300 225,671.300 243,670 253,670.700 262.700,672.300 272.700,667.300 282.300,668.700 292.300,673.300 302,665.300 311.500,667.300 321,666.700 331,673.300 350.700,673 360.300,671.700 399.500,671.300 409,669.300 438.300,669.300 447.800,669.700 457.900,672.300 467.500,665.700 477,656 486.700,660.700 497.600,671.300 526,672.700 545.500,670.700 555,669 565,663 574.600,667.700 584.700,665.700 603.800,666.700 613.900,664 623.400,670.700 633,673 652.600,671 662.700,672 672,669.300 681.800,669 711,660.700 721,663 730.600,660.700 740,660.300 750,659.700 769,656.300 779.700,662 808.400,659.700 828,652.700 838.500,652 848,654.300 867.200,655.300 876.800,653.300 886.400,647.300 896,650.300 917.500,645 925.600,644 935.600,647 945.200,647.700 955.700,652.300 964.400,650.700 975,652 984.400,662.700 994,655.700 1003.600,661.700 1013,660.700 1032.300,668.700 1042.800,669.700 1052.400,668.700 1062,671 1080,674.300 1090.700,671.300 1120.800,668.300 1140,674.300"/>

<!-- MFI -->
<rect x="0" y="727.300" width="1431" height="72" fill="#f4e6fd"/>
<path stroke="#c6c2ca" stroke-width="1" stroke-dasharray="5 3" fill="none" d="M0 727.300H1431M0 799.300H1431"/>
<path stroke="#ece0f5" fill="none" d="M0 763.300H1431"/>
<polyline class="line" stroke="#3ed6b0" points="0,763.300 9.600,745 19,735.300 29.700,738.300 38.800,752.700 48.300,755.700 58.400,770 68,742.300 78,744.300 87.600,739 97,732.300 107.200,741 117.200,743.300 136.400,756.300 146,752.300 155.500,761.300 174.600,755.300 204.300,769 214,774.300 224,777.300 233.500,788.300 253,776.700 262.700,775.300 272.700,765.300 282.300,765.300 292.300,760.700 302,758.300 311.500,747.300 321,745.300 331,759.300 340.700,766.300 350.700,758.300 360.300,763.300 370,764.300 389.500,769.300 399.500,766.300 418.700,771.300 428.300,767.300 438.300,781.300 447.800,790.300 457.900,789.300 467.500,761.300 477,730.300 486.700,727.700 497.600,752.300 506.300,766.300 516.300,761.300 526,762.300 536,766.300 545.500,765.300 555,761.300 565,753.300 574.600,761.300 584.700,764.300 594.300,760.300 603.800,760.300 613.900,767 623.400,778.300 633,774.300 643,767.300 652.600,769.300 662.700,768.300 672,763.300 681.800,763.300 691.900,766.300 701.400,776.300 711,759.300 721,752.300 730.600,747.300 740,765.300 750,756.700 759.600,751.700 769,742.300 779.700,744.300 788.800,748.300 798.300,744.300 808.400,745.300 818,744.300 828,742.300 838,742.300 847.600,749.700 857.700,754.300 867.200,762.300 876.800,744.300 886.400,745.300 896,748.300 905.500,745.300 917.500,732.300 925.600,726.300 935.600,725.300 945.200,729.300 955.700,736.300 964.400,737.300 975,734.300 984.400,748.300 994,742.300 1003.600,745.300 1013,747.300 1022.700,759.300 1032.300,762.300 1042.800,769.300 1052.400,774.300 1062,783.300 1073,790.300 1081,791.300 1090.700,780.300 1101.700,778.300 1110.300,783.300 1120.800,772.300 1130.400,780.300 1140,780.300"/>

<!-- date axis -->
<text class="dt" x="145" y="819" textLength="41" lengthAdjust="spacingAndGlyphs">12月 24</text>
<text class="dt" x="262" y="819" textLength="41" lengthAdjust="spacingAndGlyphs">12月 26</text>
<text class="dt" x="379" y="819" textLength="41" lengthAdjust="spacingAndGlyphs">12月 28</text>
<text class="dt" x="496" y="819" textLength="41" lengthAdjust="spacingAndGlyphs">12月 30</text>
<text class="dt" x="620" y="819" textLength="26" lengthAdjust="spacingAndGlyphs">1月 1</text>
<text class="dt" x="737" y="819" textLength="27" lengthAdjust="spacingAndGlyphs">1月 3</text>
<text class="dt" x="854" y="819" textLength="27" lengthAdjust="spacingAndGlyphs">1月 5</text>
<text class="dt" x="970" y="819" textLength="28" lengthAdjust="spacingAndGlyphs">1月 7</text>
<text class="dt" x="1087" y="819" textLength="27.500" lengthAdjust="spacingAndGlyphs">1月 9</text>
<text class="dt" x="1201" y="819" textLength="33" lengthAdjust="spacingAndGlyphs">1月 11</text>
<text class="dt" x="1318" y="819" textLength="34" lengthAdjust="spacingAndGlyphs">1月 13</text>
<text x="1455" y="822" style="font-size:13px;fill:#777">筹</text>
<text x="1477" y="822" style="font-size:13px;fill:#777">爆</text>
</svg>
</body>
</html>
